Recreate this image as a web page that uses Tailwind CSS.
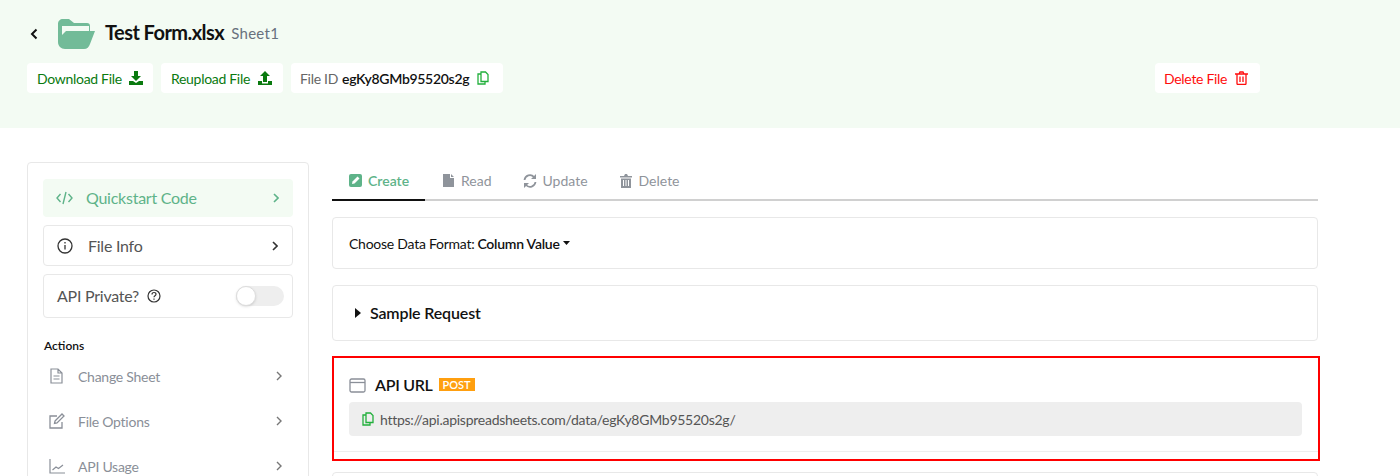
<!DOCTYPE html>
<html><head><meta charset="utf-8"><script src="https://cdn.jsdelivr.net/npm/@tailwindcss/browser@4"></script></head>
<body class="bg-white">
<div class="h-[476px] w-[1400px] overflow-hidden font-['Lato',sans-serif] text-[#111]">
  <header class="h-[128px] bg-[#f3fbf3] pl-[27px] pt-[16px] pr-[140px]">
    <div class="flex h-[36px] items-center">
      <svg class="ml-[3px] h-[12px] w-[8px]" viewBox="0 0 8 12" fill="none" stroke="#111" stroke-width="2"><path d="M6.500 1.500 2 6l4.500 4.500"/></svg>
      <svg class="ml-[19px] h-[32px] w-[39px]" viewBox="0 0 39 32"><path d="M1 6c0-3 2-5 5-5h6l5 4h13c2 0 3 1 3 3v5h5l-5 13c-1 3-3 5-6 5H8c-4 0-7-3-7-7z" fill="#72bb98"/><path d="M5 8h27v5H9l-4 4z" fill="#f3fbf3"/></svg>
      <span class="ml-[9px] -mt-[4px] text-[20px] font-bold tracking-[-0.55px]">Test Form.xlsx</span>
      <span class="ml-[7px] -mt-[1px] text-[15px] tracking-[0.3px] text-[#68717d]">Sheet1</span>
    </div>
    <div class="mt-[11px] flex h-[30px] text-[14px] tracking-[-0.3px]">
      <div class="flex w-[126px] items-center rounded bg-white pl-[10px] text-[#0a7a0f]">Download File
        <svg class="ml-[7px] h-[14px] w-[14px]" viewBox="0 0 14 14" fill="#0a7a0f"><path d="M5 0h4v5h3L7 10 2 5h3zM0 10h4l3 2 3-2h4v4H0z"/></svg></div>
      <div class="ml-[8px] flex w-[122px] items-center rounded bg-white pl-[10px] text-[#0a7a0f]">Reupload File
        <svg class="ml-[8px] h-[14px] w-[14px]" viewBox="0 0 14 14" fill="#0a7a0f"><path d="M7 0l5 5H9v6H5V5H2zM0 10h4v2.500h6V10h4v4H0z"/></svg></div>
      <div class="ml-[8px] flex w-[212px] items-center rounded bg-white pl-[9px] text-[#666]">File ID <span class="ml-[4px] font-semibold text-[#111]">egKy8GMb95520s2g</span>
        <svg class="ml-[8px] h-[14px] w-[12px]" viewBox="0 0 12 14" fill="none" stroke="#22b03c" stroke-width="1.300"><path d="M4 3H1v10h7v-2.500M4 1v9.500h7V3.500L8.500 1z"/></svg></div>
      <div class="ml-[652px] flex w-[105px] items-center rounded bg-white pl-[9px] text-[#ff0d0d]">Delete File
        <svg class="ml-[8px] h-[14px] w-[13px]" viewBox="0 0 13 14" fill="none" stroke="#ff0d0d" stroke-width="1.300"><path d="M0 3h13M2 3v9.500c0 .5.500 1 1 1h7c.5 0 1-.5 1-1V3M4 3l1-2h3l1 2M5 5.500v5.500M8 5.500v5.500"/></svg></div>
    </div>
  </header>
  <main class="flex items-start pl-[27px] pt-[34px]">
    <aside class="h-[340px] w-[282px] shrink-0 rounded border border-[#e8e8e8] px-[15px] pt-[16px] tracking-[-0.25px]">
      <div class="flex h-[38px] items-center rounded bg-[#f3fbf3] pl-[13px] pr-[14px] text-[16px] text-[#5eb389]">
        <svg class="h-[14px] w-[17px]" viewBox="0 0 17 14" fill="none" stroke="#5eb389" stroke-width="1.400"><path d="M4.500 3 1 7l3.500 4M12.500 3 16 7l-3.500 4M10 1 7 13"/></svg>
        <span class="ml-[13px]">Quickstart Code</span>
        <svg class="ml-auto h-[10px] w-[6px]" viewBox="0 0 6 10" fill="none" stroke="#5eb389" stroke-width="1.600"><path d="M1 1l4 4-4 4"/></svg>
      </div>
      <div class="mt-[8px] flex h-[41px] items-center rounded border border-[#e8e8e8] pl-[13px] pr-[14px] text-[16px] text-[#555]">
        <svg class="h-[16px] w-[16px]" viewBox="0 0 16 16" fill="none" stroke="#333" stroke-width="1.300"><circle cx="8" cy="8" r="7"/><path d="M8 7v4.500M8 4v1.500"/></svg>
        <span class="ml-[15px]">File Info</span>
        <svg class="ml-auto h-[10px] w-[6px]" viewBox="0 0 6 10" fill="none" stroke="#333" stroke-width="1.600"><path d="M1 1l4 4-4 4"/></svg>
      </div>
      <div class="mt-[8px] flex h-[44px] items-center rounded border border-[#e8e8e8] pl-[13px] pr-[8px] text-[16px] text-[#555]">
        <span>API Private?</span>
        <svg class="ml-[8px] h-[14px] w-[14px]" viewBox="0 0 14 14" fill="none" stroke="#333" stroke-width="1.200"><circle cx="7" cy="7" r="6"/><path d="M5 5.500C5 4 6 3.500 7 3.500S9 4.200 9 5.300C9 6.800 7 6.800 7 8.300M7 9.500v1.200"/></svg>
        <div class="relative ml-auto h-[20px] w-[48px] rounded-full bg-[#eeeeee]">
          <div class="absolute left-0 top-0 h-[20px] w-[20px] rounded-full border border-[#ddd] bg-white shadow-sm"></div>
        </div>
      </div>
      <div class="mt-[20px] pl-px text-[12px] font-semibold leading-[16px] tracking-normal">Actions</div>
      <div class="mt-[11px] flex h-[45px] items-start text-[14px] text-[#8a8f98]">
        <div class="flex h-[22px] w-full items-center pl-[7px] pr-[11px]">
          <svg class="h-[16px] w-[13px]" viewBox="0 0 13 16" fill="none" stroke="#8a8f98" stroke-width="1.200"><path d="M1 1h7l4 4v10H1zM8 1v4h4M3.500 8h6M3.500 11h6"/></svg>
          <span class="ml-[15px]">Change Sheet</span>
          <svg class="ml-auto h-[10px] w-[6px]" viewBox="0 0 6 10" fill="none" stroke="#777" stroke-width="1.400"><path d="M1 1l4 4-4 4"/></svg>
        </div>
      </div>
      <div class="flex h-[45px] items-start text-[14px] text-[#8a8f98]">
        <div class="flex h-[22px] w-full items-center pl-[6px] pr-[11px]">
          <svg class="h-[16px] w-[16px]" viewBox="0 0 16 16" fill="none" stroke="#8a8f98" stroke-width="1.300"><path d="M13 9v6H1V3h7M6 8l7-7 2 2-7 7-2.500.5z"/></svg>
          <span class="ml-[13px]">File Options</span>
          <svg class="ml-auto h-[10px] w-[6px]" viewBox="0 0 6 10" fill="none" stroke="#777" stroke-width="1.400"><path d="M1 1l4 4-4 4"/></svg>
        </div>
      </div>
      <div class="flex h-[22px] items-center pl-[6px] pr-[11px] text-[14px] text-[#8a8f98]">
        <svg class="h-[15px] w-[16px]" viewBox="0 0 16 15" fill="none" stroke="#8a8f98" stroke-width="1.200"><path d="M1 0v14h15M3.500 11 7 8l2.500 1.500L14 6"/></svg>
        <span class="ml-[13px]">API Usage</span>
        <svg class="ml-auto h-[10px] w-[6px]" viewBox="0 0 6 10" fill="none" stroke="#777" stroke-width="1.400"><path d="M1 1l4 4-4 4"/></svg>
      </div>
    </aside>
    <section class="ml-[23px] w-[986px]">
      <nav class="flex h-[39px] border-b-2 border-[#d0d0d0] text-[14px] text-[#8f949b]">
        <div class="-mb-[2px] flex h-[39px] w-[93px] items-center border-b-2 border-[#111] pl-[17px] font-semibold text-[#5eb389]">
          <svg class="h-[13px] w-[13px]" viewBox="0 0 13 13"><rect width="13" height="13" rx="2" fill="#5eb389"/><path d="M3 10l.5-2.500L8.500 2.500l2 2-5 5z" fill="#fff"/></svg>
          <span class="ml-[6px]">Create</span>
        </div>
        <div class="ml-[18px] flex items-center">
          <svg class="h-[13px] w-[11px]" viewBox="0 0 11 13" fill="#8f949b"><path d="M0 0h7v4h4v9H0zM8 0l3 3H8z"/></svg>
          <span class="ml-[7px]">Read</span>
        </div>
        <div class="ml-[31px] flex items-center">
          <svg class="h-[14px] w-[14px]" viewBox="0 0 14 14" fill="none" stroke="#8f949b" stroke-width="1.800"><path d="M1.500 6a5.500 5.500 0 0 1 9.500-3M12.500 8a5.500 5.500 0 0 1-9.500 3"/><path d="M13 0v5H8zM1 14V9h5z" fill="#8f949b" stroke="none"/></svg>
          <span class="ml-[6px]">Update</span>
        </div>
        <div class="ml-[32px] flex items-center">
          <svg class="h-[14px] w-[12px]" viewBox="0 0 12 14" fill="#8f949b"><path d="M0 2h4l1-2h2l1 2h4v1.500H0zM1 4.500h10V14H1z"/><path d="M3.500 6v6M6 6v6M8.500 6v6" stroke="#fff" stroke-width="1"/></svg>
          <span class="ml-[7px]">Delete</span>
        </div>
      </nav>
      <div class="mt-[16px] flex h-[52px] items-center rounded border border-[#e8e8e8] pl-[16px] text-[14px] tracking-[-0.25px]">Choose Data Format:<span class="ml-[3px] font-semibold">Column Value</span>
        <svg class="ml-[3px] h-[4px] w-[7px]" viewBox="0 0 7 4" fill="#111"><path d="M0 0h7L3.500 4z"/></svg></div>
      <div class="mt-[16px] flex h-[56px] items-center rounded border border-[#e8e8e8] pl-[22px] text-[16px] font-semibold tracking-[-0.15px]">
        <svg class="h-[10px] w-[6px]" viewBox="0 0 6 10" fill="#111"><path d="M0 0l6 5-6 5z"/></svg>
        <span class="ml-[9px]">Sample Request</span></div>
      <div class="relative mt-[15px] h-[105px] w-[988px] border-2 border-[#ff0000] pl-[15px] pt-[17px]">
        <div class="flex h-[20px] items-center">
          <svg class="h-[15px] w-[17px]" viewBox="0 0 17 15" fill="none" stroke="#8a8f98" stroke-width="1.300"><rect x="1" y="1" width="15" height="13" rx="1.500"/><path d="M1 4.500h15"/></svg>
          <span class="ml-[9px] text-[16px] font-semibold tracking-[-0.3px]">API URL</span>
          <span class="ml-[6px] -mt-[1px] bg-[#ff9f0f] px-[4px] text-[11px] font-semibold leading-[13px] text-white">POST</span>
        </div>
        <div class="mt-[7px] flex h-[34px] w-[953px] items-center rounded bg-[#eeeeee] pl-[13px] text-[14px] tracking-[-0.26px] text-[#555]">
          <svg class="h-[14px] w-[12px]" viewBox="0 0 12 14" fill="none" stroke="#22b03c" stroke-width="1.300"><path d="M4 3H1v10h7v-2.500M4 1v9.500h7V3.500L8.500 1z"/></svg>
          <span class="ml-[6px]">https://api.apispreadsheets.com/data/egKy8GMb95520s2g/</span>
        </div>
        <div class="absolute bottom-[7px] left-0 right-0 h-px bg-[#eeeeee]"></div>
      </div>
      <div class="mt-[11px] h-[20px] rounded border border-[#e8e8e8]"></div>
    </section>
  </main>
</div>
</body></html>
